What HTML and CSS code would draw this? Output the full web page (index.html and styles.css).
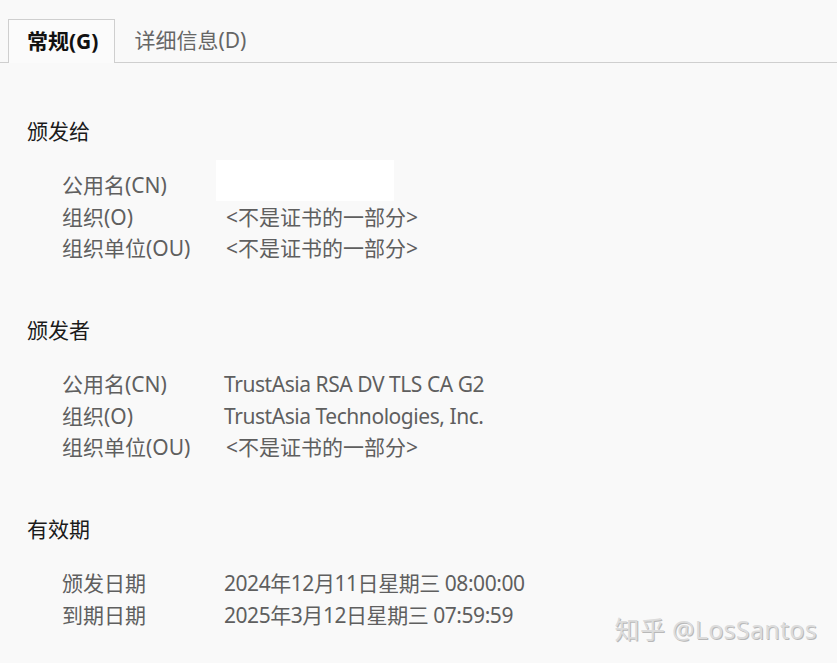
FILE: index.html
```html
<!DOCTYPE html>
<html lang="zh-CN">
<head>
<meta charset="utf-8">
<title>证书</title>
<link rel="stylesheet" href="styles.css">
</head>
<body>
<div class="tabbar">
  <div class="tab active">常规(G)</div>
  <div class="tab">详细信息(D)</div>
</div>
<div class="content">
  <section class="section">
    <h2 class="heading">颁发给</h2>
    <div class="fields">
      <div class="label">公用名(CN)</div>
      <div class="value"><div class="redact"></div></div>
      <div class="label">组织(O)</div>
      <div class="value alt">&lt;不是证书的一部分&gt;</div>
      <div class="label">组织单位(OU)</div>
      <div class="value alt">&lt;不是证书的一部分&gt;</div>
    </div>
  </section>
  <section class="section">
    <h2 class="heading">颁发者</h2>
    <div class="fields">
      <div class="label">公用名(CN)</div>
      <div class="value latin">TrustAsia RSA DV TLS CA G2</div>
      <div class="label">组织(O)</div>
      <div class="value latin">TrustAsia Technologies, Inc.</div>
      <div class="label">组织单位(OU)</div>
      <div class="value alt">&lt;不是证书的一部分&gt;</div>
    </div>
  </section>
  <section class="section">
    <h2 class="heading">有效期</h2>
    <div class="fields">
      <div class="label">颁发日期</div>
      <div class="value date">2024年12月11日星期三 08:00:00</div>
      <div class="label">到期日期</div>
      <div class="value date">2025年3月12日星期三 07:59:59</div>
    </div>
  </section>
</div>
<div class="watermark">知乎 @LosSantos</div>
</body>
</html>
```
FILE: styles.css
```css
html, body {
  margin: 0;
  padding: 0;
}
body {
  width: 837px;
  height: 663px;
  overflow: hidden;
  position: relative;
  background: #f9f9f9;
  font-family: "Noto Sans", "Noto Sans CJK SC", sans-serif;
  font-size: 21px;
  color: #5f5f5f;
}
.tabbar {
  display: flex;
  align-items: flex-end;
  height: 63px;
  border-bottom: 1px solid #cfcfcf;
  padding-left: 8px;
  box-sizing: border-box;
}
.tab {
  height: 43px;
  line-height: 43px;
  padding: 0 17px 0 19px;
  color: #666;
  box-sizing: border-box;
}
.tab.active {
  font-weight: bold;
  color: #111;
  border: 1px solid #cfcfcf;
  border-bottom: none;
  background: #fbfbfb;
  margin-bottom: -1px;
  height: 44px;
  padding: 0 16px 0 18px;
}
.content {
  padding: 53px 0 0 27px;
}
.section {
  margin-bottom: 50.5px;
}
.heading {
  margin: 0 0 22.5px 0;
  font-size: 21px;
  font-weight: normal;
  line-height: 31.5px;
  color: #1b1b1b;
}
.fields {
  display: grid;
  grid-template-columns: 162px auto;
  padding-left: 35px;
  line-height: 31.5px;
}
.value.alt {
  padding-left: 2px;
}
.value.latin {
  letter-spacing: -0.45px;
}
.value.date {
  letter-spacing: -0.45px;
}
.redact {
  width: 178px;
  height: 41px;
  margin: -10px 0 0 -8px;
  background: #ffffff;
}
.watermark {
  position: absolute;
  right: 20px;
  bottom: 17px;
  font-size: 25px;
  color: #dcdcdc;
  text-shadow: 1px 1px 0 #b8b8b8;
  letter-spacing: 0.3px;
}
```
